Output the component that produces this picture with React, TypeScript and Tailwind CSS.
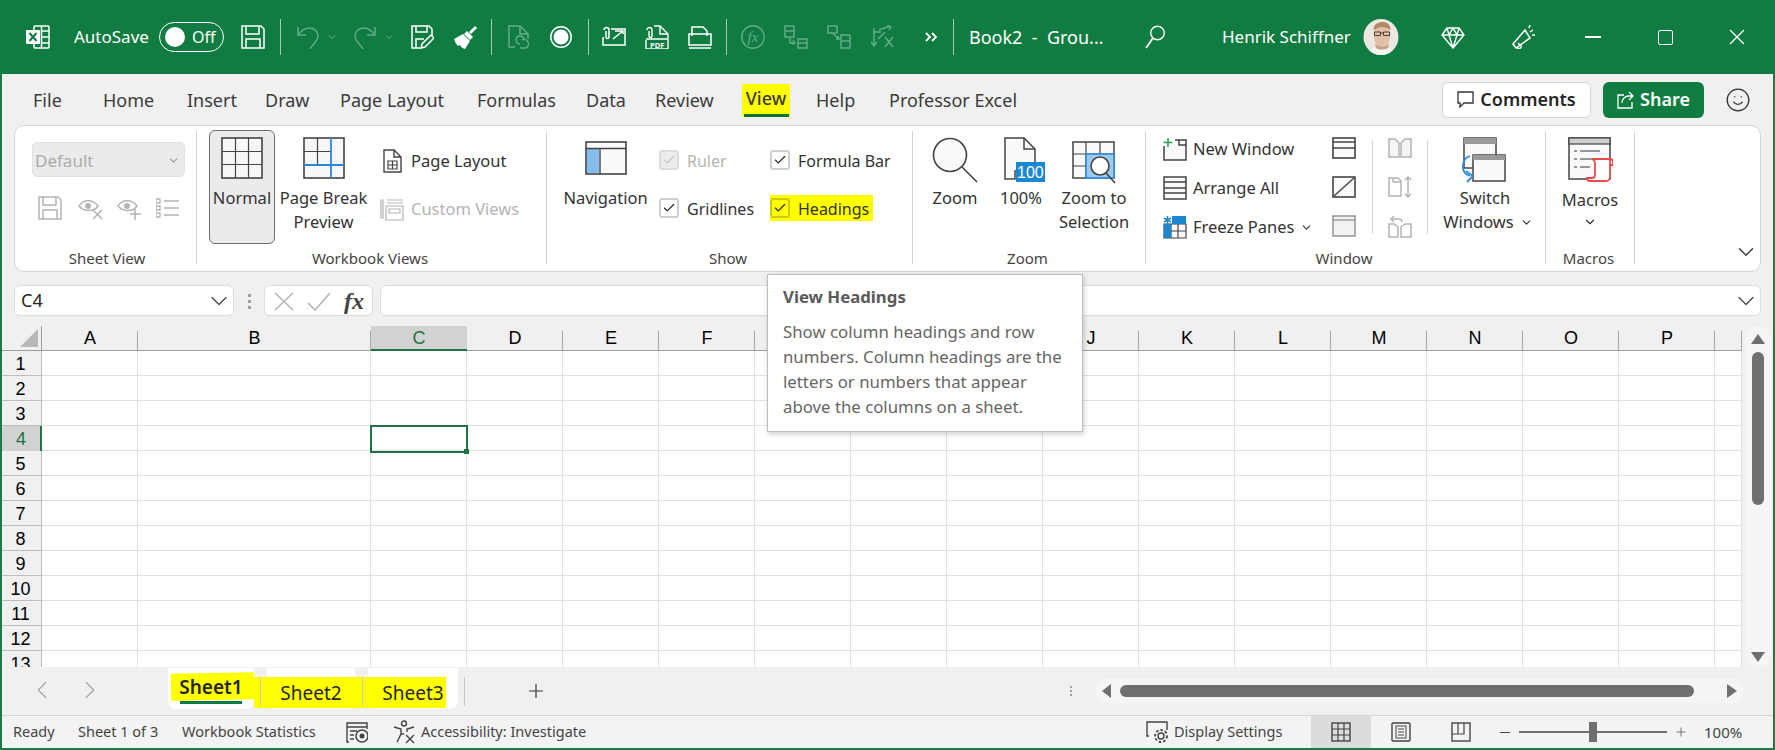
import type { ReactNode } from 'react';
import { ChevronDown, ChevronLeft, ChevronRight, Check, Plus, Smile, X } from 'lucide-react';

const DIM = '#62ab88';
const INK = '#444444';
const GREY = '#b4b4b4';
const BLUE = '#2b88d8';

// G, H and I sit behind the tooltip in this view
const COLS = ['A', 'B', 'C', 'D', 'E', 'F', '', '', '', 'J', 'K', 'L', 'M', 'N', 'O', 'P', ''];
const ROWS = [1, 2, 3, 4, 5, 6, 7, 8, 9, 10, 11, 12, 13];

function Ico({ w, h = 24, className, children }: { w: number; h?: number; className?: string; children: ReactNode }) {
  return (
    <svg width={w} height={h} viewBox={`0 0 ${w} ${h}`} fill="none" className={`shrink-0 ${className ?? ''}`}>
      {children}
    </svg>
  );
}

function TitleSep({ className }: { className: string }) {
  return <div className={`h-[36px] w-px shrink-0 bg-[#9fccb3] ${className}`} />;
}

function ExcelLogo() {
  return (
    <Ico w={24} className="ml-[24px]">
      <rect x="8" y="1" width="15" height="22" rx="1" stroke="#fff" strokeWidth="1.5" />
      <path d="M15 6h8M15 12h8M15 18h8M15.5 1v22" stroke="#fff" strokeWidth="1.5" />
      <rect x="0" y="5" width="14" height="14" rx="1" fill="#fff" />
      <path d="M3.5 8l7 8M10.5 8l-7 8" stroke="#107c41" strokeWidth="2" />
    </Ico>
  );
}

function SaveIcon({ color, className }: { color: string; className?: string }) {
  return (
    <Ico w={24} className={className}>
      <path d="M1 1h19l3 3v19H1z" stroke={color} strokeWidth="1.5" />
      <path d="M5 1v8h13V1M5 23v-9h14v9" stroke={color} strokeWidth="1.5" />
    </Ico>
  );
}

function TitleBar() {
  return (
    <div className="flex h-[74px] shrink-0 items-center text-[17px] text-white">
      <ExcelLogo />
      <span className="ml-[24px] w-[85px] shrink-0">AutoSave</span>
      <div className="flex h-[30px] w-[65px] shrink-0 items-center rounded-full border border-white pl-[5px]">
        <div className="size-[20px] rounded-full bg-white" />
        <span className="ml-[7px] text-[16px]">Off</span>
      </div>
      <SaveIcon color="#fff" className="ml-[17px]" />
      <TitleSep className="ml-[15px]" />
      <Ico w={23} className="ml-[16px]">
        <path d="M1 2v8h8" stroke={DIM} strokeWidth="1.5" />
        <path d="M1 10c3-4 6-7 11-7 5 0 9 3 9 8 0 5-5 8-8 13" stroke={DIM} strokeWidth="1.5" />
      </Ico>
      <ChevronDown size={12} strokeWidth={2} color={DIM} className="ml-[6px] shrink-0" />
      <Ico w={22} className="ml-[16px]">
        <path d="M21 2v8h-8" stroke={DIM} strokeWidth="1.5" />
        <path d="M21 10c-3-4-6-7-11-7-5 0-9 3-9 8 0 5 5 8 8 13" stroke={DIM} strokeWidth="1.5" />
      </Ico>
      <ChevronDown size={12} strokeWidth={2} color={DIM} className="ml-[7px] shrink-0" />
      <Ico w={24} className="ml-[15px]">
        <path d="M10 23H2V1h17l3 3v7" stroke="#fff" strokeWidth="1.5" />
        <path d="M6 1v6h11V1M6 23v-9h8" stroke="#fff" strokeWidth="1.5" />
        <path d="M11 23l1-4 9-9 3 3-9 9z" stroke="#fff" strokeWidth="1.5" />
      </Ico>
      <Ico w={25} className="ml-[19px]">
        <path d="M24 3l-2-2-6 6 2 2z" fill="#fff" />
        <path d="M14 6l6 6-3 3-6-6z" fill="#fff" />
        <path d="M1 14l9-5 7 7-5 8c-3-1-4-2-5-4l-2 1c-2-2-3-4-4-7z" fill="#fff" />
      </Ico>
      <TitleSep className="ml-[13px]" />
      <Ico w={22} className="ml-[16px]">
        <path d="M7 22H1V1h11l8 8v5M12 1v8h8" stroke={DIM} strokeWidth="1.5" />
        <path d="M12 19a4 4 0 1 1 4-5M14 15a4 4 0 1 1 4 8h-6" stroke={DIM} strokeWidth="1.5" />
      </Ico>
      <Ico w={22} className="ml-[20px]">
        <circle cx="11" cy="12" r="10.2" stroke="#fff" strokeWidth="1.5" />
        <circle cx="11" cy="12" r="7.5" fill="#fff" />
      </Ico>
      <TitleSep className="ml-[16px]" />
      <Ico w={24} className="ml-[13px]">
        <path d="M9 4h14v16H1V12" stroke="#fff" strokeWidth="1.5" />
        <path d="M2 5a2.5 2.5 0 0 1 5 0v7a1.5 1.5 0 0 1-3 0V6" stroke="#fff" strokeWidth="1.5" />
        <path d="M11 14l10-8M13 6h8v3" stroke="#fff" strokeWidth="1.5" />
      </Ico>
      <Ico w={24} className="ml-[19px]">
        <path d="M9 1h6l8 8v4M15 1v8h8M1 15v9h22V14H1" stroke="#fff" strokeWidth="1.4" />
        <path d="M2 5a2.5 2.5 0 0 1 5 0v6a1.5 1.5 0 0 1-3 0V6" stroke="#fff" strokeWidth="1.4" />
        <text x="5" y="22.5" fontSize="7.5" fontWeight="700" fill="#fff">PDF</text>
      </Ico>
      <Ico w={24} className="ml-[19px]">
        <path d="M4 11V2h11l4 4v5" stroke="#fff" strokeWidth="1.5" />
        <path d="M1 9h22v11H1zM1 23h22" stroke="#fff" strokeWidth="1.5" />
      </Ico>
      <TitleSep className="ml-[14px]" />
      <Ico w={24} className="ml-[14px]">
        <circle cx="12" cy="12" r="11.2" stroke={DIM} strokeWidth="1.4" />
        <text x="12" y="17" textAnchor="middle" fontSize="15" fontStyle="italic" fontFamily="'Liberation Serif', serif" fill={DIM}>fx</text>
      </Ico>
      <Ico w={24} className="ml-[19px]">
        <path d="M1 1h9v11H1zM1 6h9M14 14h9v9h-9zM14 18h9M6 13v5h5M9 15l2 3-3 1" stroke={DIM} strokeWidth="1.5" />
      </Ico>
      <Ico w={24} className="ml-[19px]">
        <path d="M1 1h9v7H1zM14 10h9v13h-9zM14 16h9M6 9l6 5M11 11l1 3-3 0" stroke={DIM} strokeWidth="1.5" />
      </Ico>
      <Ico w={24} className="ml-[19px]">
        <path d="M3 7h8M4 3v18M1 17l3 4 3-4M9 5l11-4M17 0l4 2-2 3M8 14l7-7M15 12l8 10M23 12l-8 10" stroke={DIM} strokeWidth="1.5" />
      </Ico>
      <Ico w={12} h={12} className="ml-[31px]">
        <path d="M1 2l4 4-4 4M7 2l4 4-4 4" stroke="#fff" strokeWidth="1.8" />
      </Ico>
      <TitleSep className="ml-[16px]" />
      <span className="ml-[15px] w-[134px] shrink-0 whitespace-pre text-[18px]">Book2  -  Grou...</span>
      <Ico w={20} className="ml-[42px]">
        <circle cx="12.5" cy="8" r="6.8" stroke="#fff" strokeWidth="1.4" />
        <path d="M8 13L1 23" stroke="#fff" strokeWidth="1.8" />
      </Ico>
      <span className="ml-[57px] w-[141px] shrink-0 whitespace-nowrap">Henrik Schiffner</span>
      <svg width="36" height="36" viewBox="0 0 36 36" className="shrink-0">
        <clipPath id="face"><ellipse cx="18" cy="18" rx="17.5" ry="18" /></clipPath>
        <g clipPath="url(#face)">
          <rect width="36" height="36" fill="#ece7e1" />
          <path d="M3 36c2-7 9-8 15-8s13 1 15 8z" fill="#faf7f3" />
          <ellipse cx="19" cy="16" rx="8.5" ry="12" fill="#e3bfa6" />
          <path d="M10.5 11c0-6 5-8 9-8s8 2 8 8c-3-2-5-3-8-3s-6 1-9 3z" fill="#b08a66" />
          <path d="M12 24c3 5 11 5 14 0l-1 5c-3 2-9 2-12 0z" fill="#c2a184" />
          <path d="M11.5 13h6v3.500h-6zM20.500 13h6v3.500h-6zM17.500 14h3" stroke="#3a3532" strokeWidth="0.9" fill="none" />
        </g>
      </svg>
      <Ico w={24} className="ml-[42px]">
        <path d="M6 3h12l5 7-11 13L1 10zM1 10h22M8 10l4 13 4-13M6 3l2 7 4-7 4 7 2-7" stroke="#fff" strokeWidth="1.4" />
      </Ico>
      <Ico w={24} className="ml-[46px]">
        <path d="M14 5L2 19l3 4 14-10z" stroke="#fff" strokeWidth="1.5" />
        <path d="M7 18l3 3a2 2 0 0 1-4 1M19 7l3-2M18 3l1-3M21 10h3" stroke="#fff" strokeWidth="1.5" />
      </Ico>
      <div className="ml-[50px] h-[2px] w-[16px] shrink-0 bg-white" />
      <div className="ml-[57px] size-[15px] shrink-0 rounded-[2px] border-[1.5px] border-white" />
      <X size={26} strokeWidth={1.2} className="ml-[51px] shrink-0" />
    </div>
  );
}

function TabsRow() {
  return (
    <div className="flex h-[51px] shrink-0 items-center bg-[#f0f0f0] text-[18px] text-[#3b3b3b] [&>span]:mt-[2px]">
      <span className="ml-[31px] w-[30px] shrink-0">File</span>
      <span className="ml-[40px] w-[53px] shrink-0">Home</span>
      <span className="ml-[31px] w-[48px] shrink-0">Insert</span>
      <span className="ml-[30px] w-[45px] shrink-0">Draw</span>
      <span className="ml-[30px] w-[106px] shrink-0">Page Layout</span>
      <span className="ml-[31px] w-[80px] shrink-0">Formulas</span>
      <span className="ml-[29px] w-[40px] shrink-0">Data</span>
      <span className="ml-[29px] w-[61px] shrink-0">Review</span>
      <div className="relative ml-[26px] mt-[2px] flex h-[33px] w-[48px] shrink-0 justify-center bg-[#ffff00] pt-px font-medium">
        View
        <div className="absolute bottom-0 left-[2px] h-[3px] w-[45px] bg-[#0f7430]" />
      </div>
      <span className="ml-[26px] w-[40px] shrink-0">Help</span>
      <span className="ml-[33px] w-[128px] shrink-0 whitespace-nowrap">Professor Excel</span>
      <div className="ml-[425px] flex h-[36px] w-[149px] shrink-0 items-center justify-center gap-[6px] rounded-[6px] border border-[#d6d6d6] bg-white font-semibold text-[#262626]">
        <Ico w={17} h={18}>
          <path d="M1 1h15v11H7l-4 4v-4H1z" stroke="#333" strokeWidth="1.3" />
        </Ico>
        Comments
      </div>
      <div className="ml-[12px] flex h-[36px] w-[101px] shrink-0 items-center justify-center gap-[6px] rounded-[6px] bg-[#107c41] font-semibold text-white">
        <Ico w={17} h={18}>
          <path d="M7 4H1v13h14v-6M5 12c0-4 3-7 7-7h4M12 1l4 4-4 4" stroke="#fff" strokeWidth="1.3" />
        </Ico>
        Share
      </div>
      <Smile size={26} strokeWidth={1.2} color="#333" className="ml-[21px] shrink-0" />
    </div>
  );
}

function GroupSep() {
  return <div className="mt-[5px] h-[133px] w-px shrink-0 bg-[#d4d4d4]" />;
}

function GroupLabel({ children, className }: { children: ReactNode; className?: string }) {
  return <div className={`mt-auto h-[25px] shrink-0 text-center text-[15px] leading-[24px] text-[#444] ${className ?? 'pr-[3px]'}`}>{children}</div>;
}

function Large({
  icon,
  lines,
  className,
}: {
  icon: ReactNode;
  lines: ReactNode[];
  className: string;
}) {
  return (
    <div className={`mt-[4px] flex h-[114px] shrink-0 flex-col items-center text-center text-[16.5px] leading-[24px] text-[#333] ${className}`}>
      <div className="flex h-[43px] items-start">{icon}</div>
      <div className="mt-[6px] whitespace-nowrap">
        {lines.map((line, i) => (
          <div key={i}>{line}</div>
        ))}
      </div>
    </div>
  );
}

function GridIcon() {
  return (
    <Ico w={42} h={42}>
      <rect x="1" y="1" width="40" height="40" fill="#f7f7f7" stroke={INK} strokeWidth="1.6" />
      <path d="M14.5 1v40M27.5 1v40M1 14.5h40M1 27.5h40" stroke={INK} strokeWidth="1.2" />
    </Ico>
  );
}

function Checkbox({ state = 'on' }: { state?: 'on' | 'disabled' | 'marked' }) {
  const tone =
    state === 'disabled'
      ? 'border-[#dcdcdc] bg-[#ececec]'
      : state === 'marked'
        ? 'border-[#cccc00] bg-[#ffff00]'
        : 'border-[#cfcfcf] bg-white';
  return (
    <div className={`flex size-[20px] shrink-0 items-center justify-center rounded-[3px] border-2 ${tone}`}>
      <Check size={14} strokeWidth={2} color={state === 'disabled' ? '#c4c4c4' : '#222'} />
    </div>
  );
}

function Ribbon() {
  return (
    <div className="ml-[12px] mr-[12px] flex h-[147px] shrink-0 rounded-[10px] border border-[#d4d4d4] bg-white">
      {/* Sheet View */}
      <div className="flex h-full w-[181px] shrink-0 flex-col">
        <div className="ml-[17px] mt-[16px] flex h-[35px] w-[153px] items-center justify-between rounded-[5px] border border-[#e2e2e2] bg-[#ebebeb] pl-[2px] pr-[4px] pt-[2px] text-[17px] text-[#acacac]">
          Default
          <ChevronDown size={13} strokeWidth={2} color="#9a9a9a" />
        </div>
        <div className="mt-[19px] flex items-center">
          <SaveIcon color={GREY} className="ml-[23px]" />
          <Ico w={25} className="ml-[16px]">
            <path d="M1 10c4-7 14-7 19 0-4 6-14 6-19 0z" stroke={GREY} strokeWidth="1.5" />
            <circle cx="10" cy="10" r="3" fill={GREY} />
            <path d="M15 14l9 9M24 14l-9 9" stroke={GREY} strokeWidth="1.5" />
          </Ico>
          <Ico w={24} className="ml-[14px]">
            <path d="M1 10c4-7 14-7 19 0-4 6-14 6-19 0z" stroke={GREY} strokeWidth="1.5" />
            <circle cx="10" cy="10" r="3" fill={GREY} />
            <path d="M18 13v11M13 18h11" stroke={GREY} strokeWidth="1.5" />
          </Ico>
          <Ico w={23} className="ml-[15px]">
            <path d="M0 3h4v4H0zM0 10h4v4H0zM0 17h4v4H0zM8 5h15M8 12h15M8 19h15" stroke={GREY} strokeWidth="1.3" />
          </Ico>
        </div>
        <GroupLabel className="pl-[3px]">Sheet View</GroupLabel>
      </div>
      <GroupSep />

      {/* Workbook Views */}
      <div className="flex h-full w-[349px] shrink-0 flex-col">
        <div className="flex">
          <Large
            icon={<GridIcon />}
            lines={['Normal']}
            className="ml-[12px] w-[66px] rounded-[6px] border border-[#6e6e6e] bg-[#ebebeb] pt-[6px]"
          />
          <Large
            icon={
              <Ico w={42} h={42}>
                <rect x="1" y="1" width="40" height="40" fill="#f7f7f7" stroke={INK} strokeWidth="1.6" />
                <path d="M14.5 1v27M1 14.5h27" stroke={INK} strokeWidth="1.2" />
                <path d="M28 1v40M1 28h40" stroke={BLUE} strokeWidth="1.8" />
              </Ico>
            }
            lines={['Page Break', 'Preview']}
            className="w-[97px] pt-[7px]"
          />
          <div className="ml-[8px] mt-[23px] flex flex-col gap-[24px] text-[16.5px] leading-[24px]">
            <div className="flex items-center text-[#333]">
              <Ico w={20} className="ml-[3px]">
                <path d="M1 1h10l7 7v15H1zM11 1v7h7" stroke={INK} strokeWidth="1.4" />
                <path d="M5 12h9v8H5zM9.5 12v8M5 16h9" stroke={INK} strokeWidth="1.2" />
              </Ico>
              <span className="ml-[8px] whitespace-nowrap">Page Layout</span>
            </div>
            <div className="flex items-center text-[#b4b4b4]">
              <Ico w={24}>
                <path d="M1 3h2v18H1zM7 3h16M7 6h16M6 9h17v14H6zM9 12h11v4H9z" stroke={GREY} strokeWidth="1.2" />
              </Ico>
              <span className="ml-[7px] whitespace-nowrap">Custom Views</span>
            </div>
          </div>
        </div>
        <GroupLabel>Workbook Views</GroupLabel>
      </div>
      <GroupSep />

      {/* Show */}
      <div className="flex h-full w-[365px] shrink-0 flex-col">
        <div className="flex">
          <Large
            icon={
              <Ico w={42} h={42} className="mt-[4px]">
                <rect x="1" y="1" width="40" height="32" fill="#fafafa" stroke={INK} strokeWidth="1.6" />
                <rect x="2" y="8" width="12" height="24" fill="#85bdec" />
                <path d="M1 7.500h40M15 8v25" stroke={INK} strokeWidth="1.4" />
              </Ico>
            }
            lines={['Navigation']}
            className="ml-[9px] w-[99px] pt-[7px]"
          />
          <div className="ml-[4px] mt-[24px] flex flex-col gap-[28px] text-[16px] leading-[20px]">
            <div className="flex w-[111px] items-center text-[#b4b4b4]">
              <Checkbox state="disabled" />
              <span className="relative top-px ml-[8px]">Ruler</span>
            </div>
            <div className="flex items-center text-[#333]">
              <Checkbox />
              <span className="relative top-px ml-[8px]">Gridlines</span>
            </div>
          </div>
          <div className="mt-[24px] flex flex-col gap-[25px] text-[16px] leading-[20px] text-[#333]">
            <div className="flex items-center">
              <Checkbox />
              <span className="relative top-px ml-[8px] whitespace-nowrap">Formula Bar</span>
            </div>
            <div className="flex h-[26px] w-[103px] items-center bg-[#ffff00]">
              <Checkbox state="marked" />
              <span className="relative top-px ml-[8px]">Headings</span>
            </div>
          </div>
        </div>
        <GroupLabel>Show</GroupLabel>
      </div>
      <GroupSep />

      {/* Zoom */}
      <div className="flex h-full w-[232px] shrink-0 flex-col">
        <div className="flex">
          <Large
            icon={
              <Ico w={46} h={46}>
                <circle cx="18" cy="18" r="16.500" fill="#fafafa" stroke={INK} strokeWidth="1.6" />
                <path d="M30 30l15 15" stroke={INK} strokeWidth="1.6" />
              </Ico>
            }
            lines={['Zoom']}
            className="ml-[7px] w-[70px] pt-[7px]"
          />
          <Large
            icon={
              <Ico w={41} h={46} className="translate-x-[3px]">
                <path d="M1 1h19l11 11v22H11v8H1z" fill="#fafafa" stroke={INK} strokeWidth="1.5" />
                <path d="M20 1v11h11" stroke={INK} strokeWidth="1.5" />
                <rect x="12" y="25" width="29" height="20" fill="#1b87d0" />
                <text x="13" y="41" fontSize="16" fontFamily="'Liberation Sans', sans-serif" fill="#fff">100</text>
              </Ico>
            }
            lines={['100%']}
            className="w-[62px] pt-[7px]"
          />
          <Large
            icon={
              <Ico w={45} h={46} className="mt-[4px]">
                <rect x="1" y="1" width="41" height="36" fill="#fafafa" stroke={INK} strokeWidth="1.5" />
                <path d="M14 1v36M28 1v36M1 13h41M1 25h41" stroke={INK} strokeWidth="1.2" />
                <path d="M14 13h28v24H14z" fill="#9ccaf0" stroke={BLUE} strokeWidth="1.5" />
                <circle cx="28" cy="25" r="9" fill="#fff" stroke={INK} strokeWidth="1.6" />
                <path d="M34 32l9 10" stroke={INK} strokeWidth="1.6" />
              </Ico>
            }
            lines={['Zoom to', 'Selection']}
            className="w-[84px] pt-[7px]"
          />
        </div>
        <GroupLabel>Zoom</GroupLabel>
      </div>
      <GroupSep />

      {/* Window */}
      <div className="flex h-full w-[399px] shrink-0 flex-col">
        <div className="flex">
          <div className="ml-[17px] mt-[11px] flex w-[169px] shrink-0 flex-col gap-[15px] text-[16.5px] leading-[24px] text-[#333]">
            <div className="flex items-center">
              <Ico w={24}>
                <path d="M1 9v14h22V3H12M16 3v5h7" fill="#fafafa" stroke={INK} strokeWidth="1.5" />
                <path d="M5 1v9M0.500 5.500h9" stroke="#2e9e5b" strokeWidth="1.5" />
              </Ico>
              <span className="ml-[6px] whitespace-nowrap">New Window</span>
            </div>
            <div className="flex items-center">
              <Ico w={24}>
                <rect x="1" y="1" width="22" height="22" fill="#fafafa" stroke={INK} strokeWidth="1.5" />
                <path d="M1 6h22M1 12h22M1 17h22" stroke={INK} strokeWidth="1.5" />
              </Ico>
              <span className="ml-[6px] whitespace-nowrap">Arrange All</span>
            </div>
            <div className="flex items-center">
              <Ico w={24}>
                <path d="M1 9h22v14H1z" fill="#fafafa" stroke={INK} strokeWidth="1.2" />
                <path d="M8 9v14M15 9v14M1 16h22" stroke={INK} strokeWidth="1.2" />
                <path d="M9 1h14v8H8v14H1V9h8z" fill="#1b87d0" />
                <path d="M4.500 1v8M1 3l7 4M8 3L1 7" stroke="#1b87d0" strokeWidth="1.5" />
              </Ico>
              <span className="ml-[6px] whitespace-nowrap">Freeze Panes</span>
              <ChevronDown size={13} strokeWidth={2} color="#333" className="ml-[5px]" />
            </div>
          </div>
          <div className="mt-[10px] flex shrink-0 flex-col gap-[15px]">
            <Ico w={24}>
              <rect x="1" y="2" width="22" height="20" fill="#fafafa" stroke={INK} strokeWidth="1.6" />
              <path d="M1 6h22M1 12h22" stroke={INK} strokeWidth="1.4" />
            </Ico>
            <Ico w={24}>
              <rect x="1" y="2" width="22" height="20" fill="#fafafa" stroke={INK} strokeWidth="1.6" />
              <path d="M2 21L22 3" stroke={INK} strokeWidth="1.4" />
            </Ico>
            <Ico w={24}>
              <rect x="1" y="2" width="22" height="20" fill="#f2f2f2" stroke="#9a9a9a" strokeWidth="1.6" />
              <path d="M1 6h22" stroke="#9a9a9a" strokeWidth="1.4" />
            </Ico>
          </div>
          <div className="ml-[16px] mt-[14px] h-[94px] w-px shrink-0 bg-[#d4d4d4]" />
          <div className="ml-[15px] mt-[10px] flex shrink-0 flex-col gap-[15px]">
            <Ico w={24}>
              <path d="M1 3h6l4 4v14H1zM13 7l4-4h6v18H13z" fill="#f5f5f5" stroke={GREY} strokeWidth="1.5" />
            </Ico>
            <Ico w={24}>
              <path d="M1 3h9l3 3v15H1zM5 3v4h8M20 2v20M17 5l3-3 3 3M17 19l3 3 3-3" stroke={GREY} strokeWidth="1.5" />
            </Ico>
            <Ico w={24}>
              <path d="M1 10h5l4 3v10H1zM13 13l4-3h6v13H13zM3 5h8a3 3 0 0 1 3 3M6 2L3 5l3 3" stroke={GREY} strokeWidth="1.5" />
            </Ico>
          </div>
          <div className="ml-[15px] mt-[14px] h-[94px] w-px shrink-0 bg-[#d4d4d4]" />
          <Large
            icon={
              <Ico w={46} h={46} className="-translate-x-[2px]">
                <rect x="4" y="1" width="32" height="30" fill="#fafafa" stroke={INK} strokeWidth="1.5" />
                <rect x="4" y="1" width="32" height="6" fill="#9a9a9a" />
                <rect x="13" y="18" width="32" height="26" fill="#fafafa" stroke={INK} strokeWidth="1.5" />
                <rect x="13" y="18" width="32" height="5" fill="#9a9a9a" />
                <path d="M10 19c-9 3-10 17 0 20M6 34l7 5-6 6" stroke={BLUE} strokeWidth="1.8" />
              </Ico>
            }
            lines={['Switch', <span key="w" className="flex items-center justify-center gap-[6px] pl-[6px]">Windows<ChevronDown size={13} strokeWidth={2} /></span>]}
            className="ml-0 w-[114px] pt-[7px]"
          />
        </div>
        <GroupLabel>Window</GroupLabel>
      </div>
      <GroupSep />

      {/* Macros */}
      <div className="flex h-full w-[88px] shrink-0 flex-col">
        <Large
          icon={
            <Ico w={45} h={46}>
              <rect x="1" y="1" width="41" height="41" fill="#fafafa" stroke={INK} strokeWidth="1.5" />
              <rect x="1" y="1" width="41" height="6" fill="#d0d0d0" stroke={INK} strokeWidth="1.2" />
              <path d="M6 14h3M12 14h20M6 22h3M12 22h12M6 30h3M12 30h10" stroke="#777" strokeWidth="1.5" />
              <path d="M24 22h18v18a4 4 0 0 1-4 4H22a3 3 0 0 1-3-3h5c2 0 3-1 3-3V26c0-2-2-4-3-4zM42 22a3 3 0 0 1 3 3v3h-3" fill="#fff" stroke="#ed4b4b" strokeWidth="1.8" />
            </Ico>
          }
          lines={[
            <div key="m" className="mt-[2px]">Macros</div>,
            <ChevronDown key="c" size={14} strokeWidth={2} className="mx-auto mt-[3px]" />,
          ]}
          className="ml-0 w-[88px] pt-[7px]"
        />
        <GroupLabel>Macros</GroupLabel>
      </div>
      <GroupSep />
      <div className="flex min-w-0 flex-1 items-end justify-end pb-[6px] pr-[1px]">
        <ChevronDown size={26} strokeWidth={1.2} color="#333" />
      </div>
    </div>
  );
}

function FormulaRow() {
  return (
    <div className="flex h-[54px] shrink-0 items-start pl-[12px] pr-[12px] pt-[13px]">
      <div className="flex h-[31px] w-[220px] shrink-0 items-center justify-between rounded-[6px] border border-[#dcdcdc] bg-white pl-[6px] text-[18px] text-[#262626]">
        C4
        <ChevronDown size={28} strokeWidth={1.1} color="#444" />
      </div>
      <div className="ml-[14px] mr-[13px] mt-[9px] flex flex-col gap-[3px]">
        <div className="size-[3px] bg-[#a0a0a0]" />
        <div className="size-[3px] bg-[#a0a0a0]" />
        <div className="size-[3px] bg-[#a0a0a0]" />
      </div>
      <div className="flex h-[31px] w-[109px] shrink-0 items-center rounded-[6px] border border-[#dcdcdc] bg-white pl-[9px]">
        <Ico w={20} h={20}>
          <path d="M1 2l18 17M19 2L1 19" stroke="#b4b4b4" strokeWidth="1.5" />
        </Ico>
        <Ico w={24} h={20} className="ml-[13px]">
          <path d="M1 12l7 7L23 2" stroke="#b4b4b4" strokeWidth="1.5" />
        </Ico>
        <span className="ml-[13px] font-['Liberation_Serif',serif] text-[24px] font-bold italic leading-[28px] text-[#444]">fx</span>
      </div>
      <div className="ml-[7px] flex h-[31px] flex-1 items-center justify-end rounded-[6px] border border-[#dcdcdc] bg-white">
        <ChevronDown size={28} strokeWidth={1.1} color="#444" />
      </div>
    </div>
  );
}

function Sheet() {
  return (
    <div className="flex h-[341px] shrink-0 overflow-hidden">
      <div className="grid h-[341px] w-[1740px] shrink-0 auto-rows-[25px] grid-cols-[40px_96px_233px_repeat(14,96px)_27px] overflow-hidden bg-white font-['Liberation_Sans',sans-serif] text-[18px]">
        <div className="flex items-end justify-end border-b border-r border-[#9e9e9e] bg-[#f0f0f0] pb-[3px] pr-[3px]">
          <div className="size-0 border-b-[18px] border-l-[18px] border-b-[#b8b8b8] border-l-transparent" />
        </div>
        {COLS.map((c, i) =>
          c === 'C' ? (
            <div key={i} className="flex items-center justify-center border-b-2 border-[#217346] bg-[#d2d2d2] pt-px text-[#217346]">
              {c}
            </div>
          ) : (
            <div key={i} className="relative flex items-center justify-center border-b border-[#9e9e9e] bg-[#f0f0f0] pt-px text-black">
              {c}
              <div className="absolute bottom-0 right-0 top-[5px] w-px bg-[#a8a8a8]" />
            </div>
          ),
        )}
        {ROWS.map((r) => (
          <RowCells key={r} row={r} />
        ))}
      </div>
      <div className="ml-[3px] flex w-[26px] shrink-0 flex-col items-center rounded-[12px] bg-[#f5f5f5] pt-[8px]">
        <div className="size-0 border-x-[7px] border-b-[10px] border-x-transparent border-b-[#6f6f6f]" />
        <div className="mt-[8px] h-[153px] w-[12px] rounded-full bg-[#6f6f6f]" />
        <div className="mt-[147px] size-0 border-x-[7px] border-t-[10px] border-x-transparent border-t-[#6f6f6f]" />
      </div>
    </div>
  );
}

function RowCells({ row }: { row: number }) {
  return (
    <>
      <div
        className={
          row === 4
            ? 'flex items-center justify-center border-r-2 border-[#217346] bg-[#d2d2d2] pt-[2px] text-[#217346]'
            : 'flex items-center justify-center border-b border-r border-[#bdbdbd] bg-[#f0f0f0] pr-[2px] pt-[2px] text-black'
        }
      >
        {row}
      </div>
      {COLS.map((c, i) => (
        <div key={i} className="relative border-b border-r border-[#e1e1e1]">
          {c === 'C' && row === 4 && (
            <div className="absolute -left-[1px] -top-[1px] z-10 h-[28px] w-[98px] border-2 border-[#217346]">
              <div className="absolute -bottom-[3px] -right-[3px] size-[5px] bg-[#217346]" />
            </div>
          )}
        </div>
      ))}
    </>
  );
}

function SheetTabs() {
  return (
    <div className="relative flex h-[49px] shrink-0 items-start border-b border-[#d4d4d4] bg-[#f0f0f0] text-[19px]">
      <ChevronLeft size={30} strokeWidth={1} color="#a6a6a6" className="ml-[25px] mt-[8px] shrink-0" />
      <ChevronRight size={30} strokeWidth={1} color="#a6a6a6" className="ml-[18px] mt-[8px] shrink-0" />

      <div className="ml-[63px] mt-px flex h-[41px] w-[86px] shrink-0 flex-col items-center rounded-b-[8px] bg-white">
        <span className="relative z-10 mt-[5px] font-semibold leading-[28px] text-[#262626]">Sheet1</span>
        <div className="relative z-10 h-[3px] w-[62px] bg-[#107c41]" />
      </div>
      <div className="relative z-10 ml-[6px] mt-[10px] h-[29px] w-px shrink-0 bg-[#c8c8c8]" />
      <div className="ml-[6px] mt-px flex h-[41px] w-[88px] shrink-0 justify-center rounded-b-[8px] bg-white">
        <span className="relative z-10 mt-[11px] leading-[28px] text-[#262626]">Sheet2</span>
      </div>
      <div className="relative z-10 ml-[7px] mt-[10px] h-[29px] w-px shrink-0 bg-[#c8c8c8]" />
      <div className="ml-[5px] mt-px flex h-[41px] w-[90px] shrink-0 justify-center rounded-b-[8px] bg-white">
        <span className="relative z-10 mt-[11px] leading-[28px] text-[#262626]">Sheet3</span>
      </div>
      <div className="ml-[6px] mt-[10px] h-[29px] w-px shrink-0 bg-[#c8c8c8]" />

      <Plus size={22} strokeWidth={1.3} color="#333" className="ml-[60px] mt-[13px] shrink-0" />

      <div className="ml-[523px] mt-[19px] flex shrink-0 flex-col gap-[2px]">
        <div className="size-[2px] bg-[#a0a0a0]" />
        <div className="size-[2px] bg-[#a0a0a0]" />
        <div className="size-[2px] bg-[#a0a0a0]" />
      </div>

      <div className="ml-[24px] mt-[11px] flex h-[25px] w-[648px] shrink-0 items-center rounded-[12px] bg-[#f5f5f5]">
        <div className="ml-[6px] size-0 border-y-[7px] border-r-[9px] border-y-transparent border-r-[#6f6f6f]" />
        <div className="ml-[9px] h-[12px] w-[574px] rounded-full bg-[#6f6f6f]" />
        <div className="ml-[33px] size-0 border-y-[7px] border-l-[10px] border-y-transparent border-l-[#6f6f6f]" />
      </div>

      {/* marker strokes over the tabs */}
      <div className="absolute left-[169px] top-[6px] z-[5] h-[27px] w-[83px] -rotate-1 bg-[#ffff00]" />
      <div className="absolute left-[252px] top-[10px] z-[5] h-[31px] w-[192px] bg-[#ffff00]" />
    </div>
  );
}

function StatusBar() {
  return (
    <div className="flex h-[32px] shrink-0 items-center whitespace-nowrap bg-[#f3f3f3] text-[14.5px] text-[#444]">
      <span className="ml-[11px] w-[42px] shrink-0">Ready</span>
      <span className="ml-[23px] w-[82px] shrink-0">Sheet 1 of 3</span>
      <span className="ml-[22px] w-[136px] shrink-0">Workbook Statistics</span>
      <Ico w={22} className="ml-[28px]">
        <path d="M3 22H1V3h20v6M1 7h20M4 11h7M4 15h4M4 19h4" stroke={INK} strokeWidth="1.4" />
        <circle cx="16" cy="16" r="6" stroke={INK} strokeWidth="1.5" />
        <circle cx="16" cy="16" r="2.500" fill={INK} />
      </Ico>
      <Ico w={22} className="ml-[25px]">
        <circle cx="11" cy="3.500" r="2.500" stroke={INK} strokeWidth="1.4" />
        <path d="M1 7l7 2v5l-4 8M21 7l-7 2v3M8 14h3" stroke={INK} strokeWidth="1.4" />
        <path d="M13 15l8 8M21 15l-8 8" stroke={INK} strokeWidth="1.4" />
      </Ico>
      <span className="ml-[6px] w-[165px] shrink-0">Accessibility: Investigate</span>
      <Ico w={22} className="ml-[560px]">
        <path d="M3 16H1V2h20v8" stroke={INK} strokeWidth="1.4" />
        <circle cx="15" cy="16" r="3" stroke={INK} strokeWidth="1.4" />
        <circle cx="15" cy="16" r="6" stroke={INK} strokeWidth="1.8" strokeDasharray="2.5 2" />
      </Ico>
      <span className="ml-[6px] w-[110px] shrink-0">Display Settings</span>
      <div className="ml-[27px] flex h-full w-[60px] shrink-0 items-center justify-center bg-[#dcdcdc]">
        <Ico w={20} h={20}>
          <rect x="1" y="1" width="18" height="18" stroke={INK} strokeWidth="1.4" />
          <path d="M7 1v18M13 1v18M1 7h18M1 13h18" stroke={INK} strokeWidth="1.2" />
        </Ico>
      </div>
      <div className="flex h-full w-[60px] shrink-0 items-center justify-center">
        <Ico w={20} h={20}>
          <rect x="1" y="1" width="18" height="18" rx="1" stroke={INK} strokeWidth="1.4" />
          <rect x="5" y="4" width="10" height="12" stroke={INK} strokeWidth="1" />
          <path d="M7 7h6M7 10h6M7 13h6" stroke={INK} strokeWidth="1" />
        </Ico>
      </div>
      <div className="flex h-full w-[60px] shrink-0 items-center justify-center">
        <Ico w={20} h={20}>
          <rect x="1" y="1" width="18" height="18" stroke={INK} strokeWidth="1.4" />
          <path d="M1 12h12V1M7 1v11" stroke={INK} strokeWidth="1.2" />
        </Ico>
      </div>
      <div className="ml-[9px] h-px w-[10px] shrink-0 bg-[#444]" />
      <div className="relative ml-[9px] flex h-[20px] w-[148px] shrink-0 items-center">
        <div className="h-[2px] w-full bg-[#6f6f6f]" />
        <div className="absolute left-[70px] top-0 h-[20px] w-[8px] bg-[#6f6f6f]" />
      </div>
      <Plus size={14} strokeWidth={1.2} color="#444" className="ml-[7px] shrink-0" />
      <span className="ml-[16px] w-[42px] shrink-0 text-[15px]">100%</span>
    </div>
  );
}

export default function App() {
  return (
    <div className="relative h-[750px] w-[1775px] overflow-hidden font-['Noto_Sans',sans-serif]">
      <div className="flex h-full flex-col border-x-2 border-b-2 border-[#1a7a48] bg-[#f0f0f0]">
        <div className="-mx-[2px] shrink-0 bg-[#107c41] pl-[2px]">
          <TitleBar />
        </div>
        <TabsRow />
        <Ribbon />
        <FormulaRow />
        <Sheet />
        <SheetTabs />
        <StatusBar />
      </div>

      <div className="absolute left-[767px] top-[274px] z-20 h-[158px] w-[316px] border border-[#bdbdbd] bg-white px-[15px] pt-[9px] text-[16.8px] leading-[25px] text-[#666] shadow-[1px_2px_5px_rgba(0,0,0,0.2)]">
        <div className="font-bold text-[#5a5a5a]">View Headings</div>
        <p className="mt-[10px] whitespace-nowrap">
          Show column headings and row
          <br />
          numbers. Column headings are the
          <br />
          letters or numbers that appear
          <br />
          above the columns on a sheet.
        </p>
      </div>
    </div>
  );
}
